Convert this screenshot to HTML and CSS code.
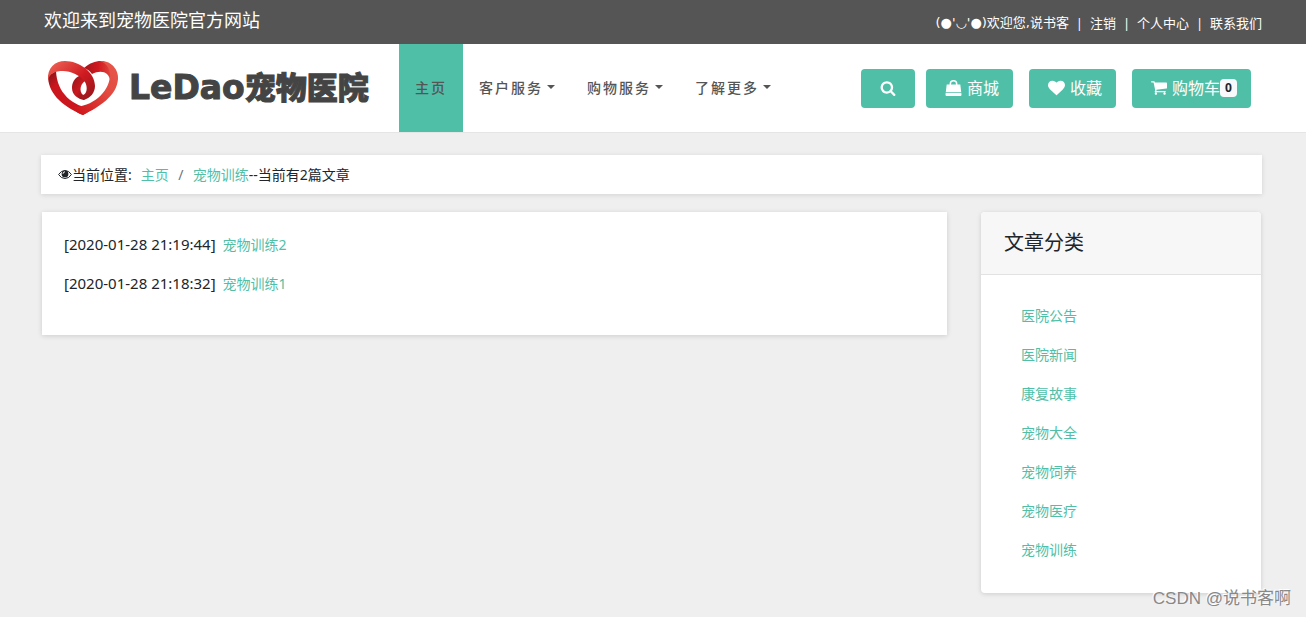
FILE: index.html
```html
<!DOCTYPE html>
<html lang="zh-CN">
<head>
<meta charset="utf-8">
<meta name="viewport" content="width=device-width, initial-scale=1">
<title>宠物医院</title>
<link rel="stylesheet" href="styles.css">
</head>
<body>
<div class="topbar">
  <div class="welcome">欢迎来到宠物医院官方网站</div>
  <div class="user-links"><span class="greeting">(●'◡'●)欢迎您,说书客</span><span class="bar">|</span><a href="#">注销</a><span class="bar">|</span><a href="#">个人中心</a><span class="bar">|</span><a href="#">联系我们</a></div>
</div>
<header class="header">
  <a class="logo" href="#">
    <svg class="logo-mark" viewBox="0 0 72 56" aria-hidden="true">
      <defs>
        <linearGradient id="left" x1="0" y1="0" x2="1" y2="1"><stop offset="0" stop-color="#f0685a"/><stop offset=".55" stop-color="#cf1a20"/><stop offset="1" stop-color="#8f151b"/></linearGradient>
        <linearGradient id="right" x1="1" y1="0" x2="0" y2="1"><stop offset="0" stop-color="#e8594c"/><stop offset=".4" stop-color="#e24a40"/><stop offset="1" stop-color="#cc0d14"/></linearGradient>
        <linearGradient id="fold" x1="0" y1="0" x2="1" y2="1"><stop offset="0" stop-color="#7d151b"/><stop offset=".25" stop-color="#cc161d"/><stop offset=".8" stop-color="#cc161d"/><stop offset="1" stop-color="#8d1319"/></linearGradient>
        <linearGradient id="loop" x1="0" y1="0" x2="1" y2="1"><stop offset="0" stop-color="#8f151b"/><stop offset=".5" stop-color="#c8181f"/><stop offset="1" stop-color="#791319"/></linearGradient>
        <linearGradient id="inner" x1="0" y1="0" x2="1" y2="0"><stop offset="0" stop-color="#a3151b"/><stop offset=".5" stop-color="#d0181f"/><stop offset="1" stop-color="#e04a40"/></linearGradient>
      </defs>
      <path fill="url(#fold)" d="M1 16C1 31 12 45 36 55L46 49C25 46 10 33 9 11Z"/>
      <path fill="url(#loop)" d="M34 15C27 18 25 23 25 28C25 35 31 39 37 40L38 36C32 34 32 25 38 21L40 17Z"/>
      <path fill="url(#left)" d="M1 20C0 8 8 1 18 1C32 1 48 12 48 26C48 33 43 38 37 40C35 39 34 37 35 35C40 35 41 27 38 22C33 15 24 11 16 11C8 11 3 13 1 20Z"/>
      <path fill="url(#inner)" d="M37 8C43 3 48 1 54 1C61 2 64 6 65 12L63 20C62 13 55 9 45 14C43 11 40 9 37 8Z"/>
      <path fill="url(#right)" d="M53 1C64 0 72 10 71 19C70 36 52 47 36 55C32 54 28 51 24 47C44 48 62 33 63 16C63 8 59 3 53 1Z"/>
    </svg>
    <span class="logo-text"><span class="logo-latin">LeDao</span><span class="logo-cjk">宠物医院</span></span>
  </a>
  <nav class="nav">
    <a class="nav-item active" href="#">主页</a>
    <button class="nav-item" type="button">客户服务<span class="caret"></span></button>
    <button class="nav-item" type="button">购物服务<span class="caret"></span></button>
    <button class="nav-item" type="button">了解更多<span class="caret"></span></button>
  </nav>
  <div class="actions">
    <button class="btn btn-search" type="button" aria-label="搜索"><svg class="icon" viewBox="0 0 1664 1792"><path d="M1152 832q0-185-131.5-316.5t-316.5-131.5-316.5 131.5-131.5 316.5 131.5 316.5 316.5 131.5 316.5-131.5 131.5-316.5zm512 832q0 52-38 90t-90 38q-54 0-90-38l-343-342q-179 124-399 124-143 0-273.5-55.5t-225-150-150-225-55.5-273.5 55.5-273.5 150-225 225-150 273.5-55.5 273.5 55.5 225 150 150 225 55.5 273.5q0 220-124 399l343 343q37 37 37 90z"/></svg></button>
    <button class="btn" type="button"><svg class="icon" viewBox="0 0 16 16"><path d="M1.200 4.500H14.800L15.700 12H.3ZM.2 12.800H15.800L16 14.500Q16 16 15 16H1Q0 16 0 14.500Z"/><path class="handle" d="M4.800 6.500V4A3.200 3.200 0 0 1 11.200 4V6.500"/></svg>商城</button>
    <button class="btn" type="button"><svg class="icon" viewBox="0 128 1792 1536"><path d="M896 1664q-26 0-44-18l-624-602q-10-8-27.5-26t-55.500-65.500-68-97.500-53.500-121-23.500-138q0-220 127-344t351-124q62 0 126.500 21.500t120 58 95.500 68.500 76 68q36-36 76-68t95.500-68.500 120-58 126.500-21.500q224 0 351 124t127 344q0 221-229 450l-623 600q-18 18-44 18z"/></svg>收藏</button>
    <button class="btn" type="button"><svg class="icon cart" viewBox="0 256 1664 1408"><path d="M640 1536q0 52-38 90t-90 38-90-38-38-90 38-90 90-38 90 38 38 90zm896 0q0 52-38 90t-90 38-90-38-38-90 38-90 90-38 90 38 38 90zm128-1088v512q0 24-16.500 42.500t-40.500 21.500l-1044 122q13 60 13 70 0 16-24 64h920q26 0 45 19t19 45-19 45-45 19h-1024q-26 0-45-19t-19-45q0-11 8-31.500t16-36 21.500-40 15.500-29.500l-177-823h-204q-26 0-45-19t-19-45 19-45 45-19h256q16 0 28.500 6.500t19.500 15.500 13 24.500 8 26 5.500 29.500 4.500 26h1201q26 0 45 19t19 45z"/></svg>购物车<span class="badge">0</span></button>
  </div>
</header>
<main class="page">
  <div class="breadcrumb">
    <svg class="eye" viewBox="0 0 14 12" aria-hidden="true"><path class="lid" d="M.6 5.500Q3 1.500 7 1.500T13.400 5.500Q11 9.500 7 9.500T.6 5.500Z"/><circle cx="7" cy="4.900" r="3.400"/><path class="glint" d="M5 4.800A2 2 0 0 1 7 2.800"/></svg><span>当前位置:</span><a class="home" href="#">主页</a><span class="slash">/</span><a href="#">宠物训练</a><span>--当前有2篇文章</span>
  </div>
  <div class="columns">
    <ul class="articles">
      <li><time>[2020-01-28 21:19:44]</time><a href="#">宠物训练2</a></li>
      <li><time>[2020-01-28 21:18:32]</time><a href="#">宠物训练1</a></li>
    </ul>
    <aside class="sidebar">
      <h2>文章分类</h2>
      <ul class="categories">
        <li><a href="#">医院公告</a></li>
        <li><a href="#">医院新闻</a></li>
        <li><a href="#">康复故事</a></li>
        <li><a href="#">宠物大全</a></li>
        <li><a href="#">宠物饲养</a></li>
        <li><a href="#">宠物医疗</a></li>
        <li><a href="#">宠物训练</a></li>
      </ul>
    </aside>
  </div>
</main>
<div class="watermark">CSDN @说书客啊</div>
</body>
</html>
```
FILE: styles.css
```css
* { box-sizing: border-box; }
body {
  margin: 0;
  background: #efefef;
  color: #212529;
  font-family: "Noto Sans", "Noto Sans CJK SC", sans-serif;
  font-size: 14px;
  line-height: 23px;
}
a { color: #50bfa8; text-decoration: none; }
ul { list-style: none; margin: 0; padding: 0; }
button { border: 0; font: inherit; cursor: pointer; }

.topbar {
  display: flex;
  justify-content: space-between;
  height: 44px;
  padding: 0 44px;
  background: #555;
  color: #fff;
}
.welcome { font-size: 18px; line-height: 40px; }
.user-links { display: flex; font-size: 13px; line-height: 46px; }
.greeting { font-family: "DejaVu Sans", "Noto Sans CJK SC", sans-serif; }
.user-links a { color: #fff; }
.bar { width: 21px; text-align: center; }

.header {
  display: flex;
  align-items: stretch;
  height: 89px;
  padding: 0 55px 0 47px;
  background: #fff;
  border-bottom: 1px solid #e5e5e5;
}
.logo { display: flex; align-items: center; width: 352px; color: #444; }
.logo-mark { width: 72px; height: 56px; margin-right: 10px; }
.logo-text { display: flex; align-items: center; font-weight: 900; white-space: nowrap; line-height: 40px; -webkit-text-stroke: 1px #444; }
.logo-latin { font-family: "DejaVu Sans", sans-serif; font-size: 33px; }
.logo-cjk { font-family: "Noto Sans CJK SC", sans-serif; font-size: 31px; line-height: 44px; padding-bottom: 4px; }

.nav { display: flex; }
.nav-item {
  display: flex;
  align-items: center;
  padding: 0 16px 2px;
  background: none;
  color: #555;
  font-weight: 500;
  letter-spacing: 2px;
  white-space: nowrap;
}
.nav-item.active { background: #50bfa8; }
.caret { margin-left: 4px; border: 4px solid transparent; border-top-color: #555; border-bottom: 0; }

.actions { display: flex; align-items: center; gap: 16px; margin-left: auto; }
.btn {
  display: flex;
  align-items: center;
  height: 39px;
  padding: 0 14px 0 19px;
  border-radius: 4px;
  background: #50bfa8;
  color: #fff;
  font-size: 16px;
  white-space: nowrap;
}
.btn-search { padding: 0 19px; margin-right: -5px; }
.icon { width: 17px; height: 16px; margin-right: 5px; fill: #fff; }
.icon.cart { width: 16px; height: 14px; }
.btn-search .icon { width: 16px; margin: 0; }
.handle { fill: none; stroke: #fff; stroke-width: 1.5; }
.badge {
  width: 17px;
  border-radius: 4px;
  background: #f8f9fa;
  color: #212529;
  font-size: 12px;
  font-weight: 700;
  line-height: 18px;
  text-align: center;
}

.page { padding: 22px 44px 24px 41px; }
.breadcrumb {
  display: flex;
  align-items: center;
  height: 39px;
  padding: 0 17px;
  margin-bottom: 18px;
  background: #fff;
  box-shadow: 0 1px 5px rgba(0, 0, 0, .12);
}
.eye { width: 14px; height: 12px; fill: #212529; }
.lid { fill: none; stroke: #212529; }
.glint { fill: none; stroke: #fff; }
.home { margin-left: 9px; }
.slash { width: 24px; color: #6c757d; text-align: center; }

.columns { display: flex; align-items: flex-start; gap: 34px; }
.articles {
  flex: 1;
  padding: 13px 22px 32px;
  margin-left: 1px;
  background: #fff;
  box-shadow: 0 1px 5px rgba(0, 0, 0, .14);
}
.articles li { display: flex; gap: 7px; padding: 8px 0; }
.articles time { font-size: 15px; }
.sidebar {
  width: 280px;
  margin-right: 1px;
  border-radius: 4px;
  overflow: hidden;
  background: #fff;
  box-shadow: 0 1px 5px rgba(0, 0, 0, .14);
}
.sidebar h2 {
  margin: 0;
  padding: 16px 23px;
  background: #f7f7f7;
  border-bottom: 1px solid #e2e2e2;
  font-size: 20px;
  font-weight: 400;
  line-height: 30px;
}
.categories { padding: 21px 40px 24px; }
.categories li { padding: 8px 0; }

.watermark {
  position: absolute;
  right: 15px;
  bottom: 5px;
  color: #888;
  font-family: "Liberation Sans", "Noto Sans CJK SC", sans-serif;
  font-size: 17px;
  line-height: 26px;
  text-shadow: -1px -1px 0 #fff;
}
```
